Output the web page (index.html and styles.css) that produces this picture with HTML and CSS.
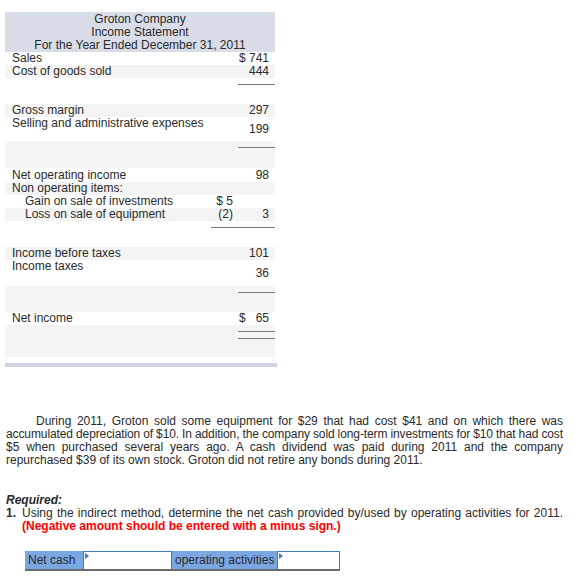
FILE: index.html
```html
<!DOCTYPE html>
<html>
<head>
<meta charset="utf-8">
<link rel="stylesheet" href="styles.css">
</head>
<body>
<table class="stmt">
  <colgroup><col class="c-label"><col class="c-mid"><col class="c-right"></colgroup>
  <tr class="head"><td colspan="3"><div>Groton Company</div><div>Income Statement</div><div>For the Year Ended December 31, 2011</div></td></tr>
  <tr class="r13"><td class="lbl">Sales</td><td></td><td class="num">$ 741</td></tr>
  <tr class="r13 alt"><td class="lbl">Cost of goods sold</td><td></td><td class="num">444</td></tr>
  <tr class="blank h26"><td></td><td></td><td><div class="rule"></div></td></tr>
  <tr class="r13 alt"><td class="lbl">Gross margin</td><td></td><td class="num">297</td></tr>
  <tr class="h24"><td class="lbl top">Selling and administrative expenses</td><td></td><td class="num">199</td></tr>
  <tr class="blank h27 alt"><td></td><td></td><td><div class="rule"></div></td></tr>
  <tr class="r14"><td class="lbl">Net operating income</td><td></td><td class="num">98</td></tr>
  <tr class="r13 alt"><td class="lbl">Non operating items:</td><td></td><td></td></tr>
  <tr class="r13"><td class="lbl ind">Gain on sale of investments</td><td class="mnum">$ 5</td><td></td></tr>
  <tr class="r13 alt"><td class="lbl ind">Loss on sale of equipment</td><td class="mnum">(2)</td><td class="num">3</td></tr>
  <tr class="blank h26"><td></td><td colspan="2"><div class="rule"></div></td></tr>
  <tr class="r13 alt"><td class="lbl">Income before taxes</td><td></td><td class="num">101</td></tr>
  <tr class="h26"><td class="lbl top">Income taxes</td><td></td><td class="num">36</td></tr>
  <tr class="blank h26 alt"><td></td><td></td><td><div class="rule"></div></td></tr>
  <tr class="r13"><td class="lbl">Net income</td><td></td><td class="num"><div class="split"><span>$</span><span>65</span></div></td></tr>
  <tr class="blank h32 alt"><td></td><td></td><td><div class="rule"></div><div class="rule2"></div></td></tr>
  <tr class="gap"><td colspan="3"></td></tr>
</table>
<div class="bar"></div>

<p class="story">During 2011, Groton sold some equipment for $29 that had cost $41 and on which there was <span class="tight">accumulated depreciation of $10. In addition, the company sold long-term investments for $10 that had cost</span> $5 when purchased several years ago. A cash dividend was paid during 2011 and the company repurchased $39 of its own stock. Groton did not retire any bonds during 2011.</p>

<div class="req">Required:</div>
<div class="q"><span class="qn">1.</span><p class="qt">Using the indirect method, determine the net cash provided by/used by operating activities for 2011. <span class="warn">(Negative amount should be entered with a minus sign.)</span></p></div>

<div class="answer">
  <div class="lab w1">Net cash</div>
  <div class="inp w2"><span class="flag"></span></div>
  <div class="lab w3">operating activities</div>
  <div class="inp w4"><span class="flag"></span></div>
</div>
</body>
</html>
```

FILE: styles.css
```css
html, body {
  margin: 0;
  padding: 0;
  background: #fff;
}
body {
  font-family: "Liberation Sans", Arial, sans-serif;
  font-size: 12px;
  line-height: 13px;
  color: #2a2a2a;
}
.stmt {
  margin: 12px 0 0 5px;
  border-collapse: collapse;
  border-spacing: 0;
  table-layout: fixed;
  width: 270px;
}
.c-label { width: 206px; }
.c-mid { width: 27px; }
.c-right { width: 37px; }
.stmt td {
  padding: 0;
  vertical-align: middle;
  white-space: nowrap;
}
.head td {
  background: #d9dde8;
  text-align: center;
  height: 39px;
  line-height: 13px;
  padding-top: 1px;
  box-sizing: border-box;
}
.r13 td { height: 13px; }
.r14 td { height: 14px; }
.h24 td { height: 24px; }
.h26 td { height: 26px; }
.h27 td { height: 27px; }
.h32 td { height: 32px; }
.alt td { background: #f4f4f4; }
.lbl { padding-left: 7px !important; }
.lbl.ind { padding-left: 20px !important; }
.lbl.top { vertical-align: top !important; }
.num {
  text-align: right;
  padding-right: 6px !important;
}
.mnum {
  text-align: right;
  padding-right: 5px !important;
}
.blank td { vertical-align: top; }
.rule {
  margin-top: 6px;
  border-top: 1px solid #7a7a7a;
}
.rule2 {
  margin-top: 6px;
  border-top: 1px solid #7a7a7a;
}
.split {
  display: flex;
  justify-content: space-between;
  padding-left: 1px;
}
.gap td { height: 6px; background: #fff; }
.bar {
  margin-left: 5px;
  width: 272px;
  height: 4px;
  background: #cfd4e2;
}
.story {
  margin: 48px 11px 0 6px;
  text-align: justify;
  text-indent: 30px;
}
.tight {
  word-spacing: -1px;
  letter-spacing: -0.1px;
}
.req {
  margin: 27px 0 0 6px;
  font-weight: bold;
  font-style: italic;
}
.q {
  display: flex;
  margin: 0 11px 0 6px;
}
.qn {
  width: 16px;
  flex: none;
  font-weight: bold;
}
.qt {
  margin: 0;
  text-align: justify;
}
.warn {
  color: #f00;
  font-weight: bold;
}
.answer {
  display: flex;
  margin: 18px 0 0 25px;
  height: 20px;
  border-bottom: 2px solid #6a6a6a;
  width: 315px;
  box-sizing: border-box;
}
.lab {
  background: #7aa7e2;
  padding-left: 3px;
  line-height: 19px;
  box-sizing: border-box;
  white-space: nowrap;
}
.inp {
  position: relative;
  background: #fff;
  border: 1px solid #3d7cc4;
  border-bottom: none;
  box-sizing: border-box;
}
.flag {
  position: absolute;
  left: 1px;
  top: 1px;
  width: 0;
  height: 0;
  border-top: 3px solid transparent;
  border-bottom: 3px solid transparent;
  border-left: 4px solid #3d7cc4;
}
.w1 { width: 58px; }
.w2 { width: 89px; }
.w3 { width: 105px; }
.w4 { width: 63px; }
```
